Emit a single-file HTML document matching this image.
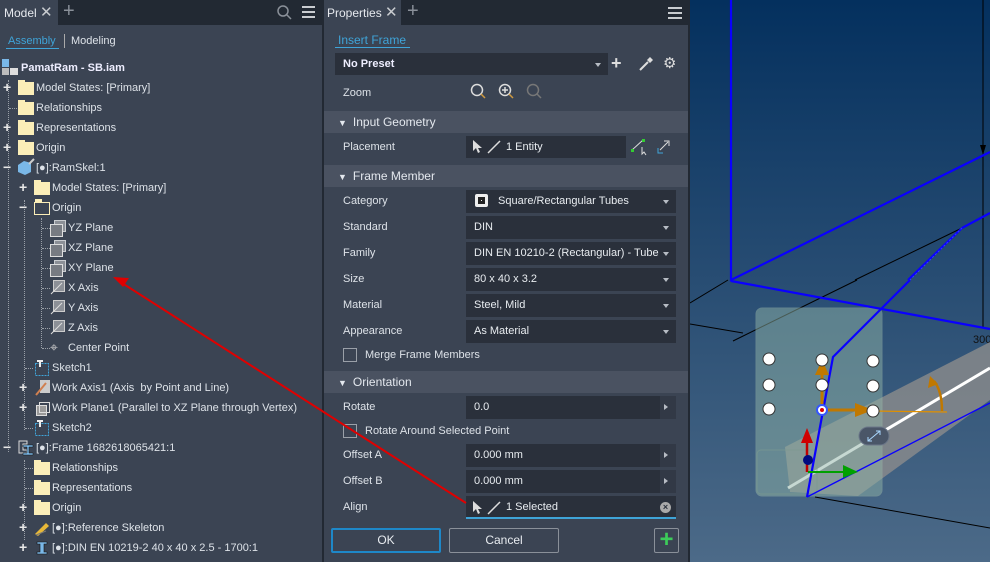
<!DOCTYPE html>
<html><head><meta charset="utf-8"><style>
*{margin:0;padding:0;box-sizing:border-box}
body{width:990px;height:562px;overflow:hidden;background:#3b4453;font-family:"Liberation Sans",sans-serif;font-size:11px;color:#dde2e8;position:relative}
.a{position:absolute;white-space:nowrap}
.t{position:absolute;white-space:nowrap;line-height:20px;height:20px}
.fold{position:absolute;width:16px;height:13px;background:#fbeeb8;border-top:2px solid #fbeeb8}
.fold:before{content:"";position:absolute;left:0;top:-4px;width:7px;height:3px;background:#fbeeb8}
.exp{position:absolute;color:#e8e8e8;font-size:14px;font-weight:bold;line-height:20px}
.pl{position:absolute;width:12px;height:12px;border:1px solid #c9ccd0;background:#8c9097}
.pl:after{content:"";position:absolute;left:-5px;top:3px;width:11px;height:11px;border:1px solid #ddd;background:#777b82}
.vd{position:absolute;border-left:1px dotted #9aa0a8;width:0}
.hd{position:absolute;border-top:1px dotted #9aa0a8;height:0;width:8px}
.hdr{position:absolute;left:324px;width:364px;height:22px;background:#4a5261;color:#e4e8ee;font-size:12px;line-height:22px;padding-left:14px}
.lbl{position:absolute;left:343px;color:#dde2e8;line-height:20px}
.fld{position:absolute;left:466px;width:210px;height:23px;background:#2a303b;color:#e8ecf0;line-height:23px;padding-left:8px}
.dd:after{content:"";position:absolute;right:7px;top:10px;border:3px solid transparent;border-top:4px solid #b7bcc4}
.sp:after{content:"";position:absolute;right:0;top:0;width:16px;height:23px;background:#323946;}
.sp:before{content:"";position:absolute;right:5px;top:8px;border:3px solid transparent;border-left:4px solid #b7bcc4;z-index:2}
.cb{position:absolute;left:343px;width:14px;height:14px;border:1px solid #9aa0a8}
</style></head><body>
<div class="a" style="left:0;top:0;width:322px;height:25px;background:#222933"></div>
<div class="a" style="left:0;top:0;width:58px;height:25px;background:#3b4453"></div>
<div class="a" style="left:4px;top:6px;font-size:12px;color:#e6e9ee">Model</div>
<div class="a" style="left:40px;top:3px;font-size:15px;color:#c9ccd0">✕</div>
<div class="a" style="left:63px;top:0px;font-size:20px;color:#8a9099">+</div>
<svg class="a" style="left:276px;top:5px" width="40" height="16"><circle cx="7" cy="6" r="5" stroke="#8a9099" stroke-width="1.5" fill="none"/><line x1="11" y1="10" x2="15" y2="14" stroke="#8a9099" stroke-width="1.5"/><path d="M26 2h13M26 7h13M26 12h13" stroke="#c9ccd0" stroke-width="2"/></svg>
<div class="a" style="left:322px;top:0;width:2px;height:562px;background:#222933"></div>
<div class="a" style="left:8px;top:35px;color:#3fa4d8;font-size:11px">Assembly</div>
<div class="a" style="left:6px;top:48px;width:53px;height:1px;background:#3fa4d8"></div>
<div class="a" style="left:64px;top:34px;width:1px;height:14px;background:#aaa"></div>
<div class="a" style="left:71px;top:35px;color:#dde2e8">Modeling</div>
<svg class="a" style="left:2px;top:59px" width="16" height="18"><rect x="0" y="0" width="7" height="8" fill="#7ab8e8"/><rect x="0" y="9" width="7" height="7" fill="#bbb"/><rect x="8" y="9" width="8" height="7" fill="#ddd"/></svg>
<div class="t" style="left:21px;top:58px;font-weight:bold;color:#eef">PamatRam - SB.iam</div>
<div class="vd" style="left:8px;top:80px;height:372px"></div>
<div class="vd" style="left:24px;top:200px;height:230px"></div>
<div class="vd" style="left:41px;top:218px;height:130px"></div>
<div class="vd" style="left:24px;top:460px;height:80px"></div>
<div class="exp" style="left:3px;top:77px">+</div><div class="fold" style="left:18px;top:82px"></div><div class="t" style="left:36px;top:78px">Model States: [Primary]</div>
<div class="hd" style="left:9px;top:108px"></div><div class="fold" style="left:18px;top:102px"></div><div class="t" style="left:36px;top:98px">Relationships</div>
<div class="exp" style="left:3px;top:117px">+</div><div class="fold" style="left:18px;top:122px"></div><div class="t" style="left:36px;top:118px">Representations</div>
<div class="exp" style="left:3px;top:137px">+</div><div class="fold" style="left:18px;top:142px"></div><div class="t" style="left:36px;top:138px">Origin</div>
<div class="exp" style="left:3px;top:157px">−</div><svg class="a" style="left:17px;top:158px" width="18" height="18"><path d="M1 7l6-4 7 2v9l-6 3-7-3z" fill="#7ab8e8"/><path d="M12 6l5-5" stroke="#ccc" stroke-width="2"/></svg><div class="t" style="left:36px;top:158px">[●]:RamSkel:1</div>
<div class="exp" style="left:19px;top:177px">+</div><div class="fold" style="left:34px;top:182px"></div><div class="t" style="left:52px;top:178px">Model States: [Primary]</div>
<div class="exp" style="left:19px;top:197px">−</div><div class="fold" style="left:34px;top:202px;background:none;border:1px solid #fbeeb8"></div><div class="t" style="left:52px;top:198px">Origin</div>
<div class="hd" style="left:42px;top:228px"></div><div class="pl" style="left:54px;top:220px"></div><div class="t" style="left:68px;top:218px">YZ Plane</div>
<div class="hd" style="left:42px;top:248px"></div><div class="pl" style="left:54px;top:240px"></div><div class="t" style="left:68px;top:238px">XZ Plane</div>
<div class="hd" style="left:42px;top:268px"></div><div class="pl" style="left:54px;top:260px"></div><div class="t" style="left:68px;top:258px">XY Plane</div>
<svg class="a" style="left:50px;top:280px" width="16" height="60"><g fill="#8c9097" stroke="#ccc"><rect x="3.5" y="0.5" width="11" height="11"/><rect x="3.5" y="20.5" width="11" height="11"/><rect x="3.5" y="40.5" width="11" height="11"/></g><path d="M1 14L12 3M1 34L12 23M1 54L12 43" stroke="#ddd"/></svg>
<div class="hd" style="left:42px;top:288px"></div><div class="t" style="left:68px;top:278px">X Axis</div>
<div class="hd" style="left:42px;top:308px"></div><div class="t" style="left:68px;top:298px">Y Axis</div>
<div class="hd" style="left:42px;top:328px"></div><div class="t" style="left:68px;top:318px">Z Axis</div>
<div class="hd" style="left:42px;top:348px"></div><div class="a" style="left:50px;top:339px;font-size:14px;color:#ccc">⌖</div><div class="t" style="left:68px;top:338px">Center Point</div>
<svg class="a" style="left:34px;top:360px" width="16" height="96"><g fill="none" stroke="#3fa4d8" stroke-dasharray="2 1"><rect x="1.5" y="3.5" width="13" height="12"/><rect x="1.5" y="63.5" width="13" height="12"/></g><path d="M3 1h6M6 1v6M3 61h6M6 61v6" stroke="#eee" stroke-width="2"/><rect x="6" y="20" width="10" height="13" fill="#ccc"/><path d="M2 35L12 23" stroke="#d08050" stroke-width="2"/><rect x="2.5" y="45.5" width="10" height="10" fill="#999" stroke="#ddd"/><rect x="5.5" y="42.5" width="10" height="10" fill="none" stroke="#ddd"/></svg>
<div class="hd" style="left:25px;top:368px"></div><div class="t" style="left:52px;top:358px">Sketch1</div>
<div class="exp" style="left:19px;top:377px">+</div><div class="t" style="left:52px;top:378px">Work Axis1 (Axis&nbsp; by Point and Line)</div>
<div class="exp" style="left:19px;top:397px">+</div><div class="t" style="left:52px;top:398px">Work Plane1 (Parallel to XZ Plane through Vertex)</div>
<div class="hd" style="left:25px;top:428px"></div><div class="t" style="left:52px;top:418px">Sketch2</div>
<div class="exp" style="left:3px;top:437px">−</div><svg class="a" style="left:18px;top:440px" width="16" height="16"><path d="M1 1h8v3h-4v6h4v3h-8z" fill="none" stroke="#ddd"/><path d="M5 5h10v2h-4v6h4v2h-10v-2h4v-6h-4z" fill="#7ab8e8" stroke="#111" stroke-width=".5"/></svg><div class="t" style="left:36px;top:438px">[●]:Frame 1682618065421:1</div>
<div class="hd" style="left:25px;top:468px"></div><div class="fold" style="left:34px;top:462px"></div><div class="t" style="left:52px;top:458px">Relationships</div>
<div class="hd" style="left:25px;top:488px"></div><div class="fold" style="left:34px;top:482px"></div><div class="t" style="left:52px;top:478px">Representations</div>
<div class="exp" style="left:19px;top:497px">+</div><div class="fold" style="left:34px;top:502px"></div><div class="t" style="left:52px;top:498px">Origin</div>
<div class="exp" style="left:19px;top:517px">+</div><svg class="a" style="left:34px;top:520px" width="16" height="16"><path d="M1 14L12 3l3 3L4 16z" fill="#e8b838"/><path d="M2 15l10-4" stroke="#777"/></svg><div class="t" style="left:52px;top:518px">[●]:Reference Skeleton</div>
<div class="exp" style="left:19px;top:537px">+</div><svg class="a" style="left:36px;top:541px" width="12" height="14"><path d="M1 1h10v2h-3v8h3v2h-10v-2h3v-8h-3z" fill="#7ab8e8" stroke="#111" stroke-width=".6"/></svg><div class="t" style="left:52px;top:538px">[●]:DIN EN 10219-2 40 x 40 x 2.5 - 1700:1</div>

<div class="a" style="left:324px;top:0;width:364px;height:25px;background:#222933"></div>
<div class="a" style="left:324px;top:0;width:77px;height:25px;background:#3b4453"></div>
<div class="a" style="left:327px;top:6px;font-size:12px;color:#e6e9ee">Properties</div>
<div class="a" style="left:385px;top:3px;font-size:15px;color:#c9ccd0">✕</div>
<div class="a" style="left:407px;top:0px;font-size:20px;color:#8a9099">+</div>
<svg class="a" style="left:667px;top:6px" width="16" height="14"><path d="M1 2h14M1 7h14M1 12h14" stroke="#c9ccd0" stroke-width="2"/></svg>
<div class="a" style="left:688px;top:0;width:2px;height:562px;background:#222933"></div>
<div class="a" style="left:338px;top:33px;color:#3fa4d8;font-size:12px">Insert Frame</div>
<div class="a" style="left:335px;top:47px;width:75px;height:1px;background:#3fa4d8"></div>
<div class="a dd" style="left:335px;top:53px;width:273px;height:22px;background:#2a303b;padding-left:8px;line-height:22px;font-weight:bold;color:#eef">No Preset</div>
<div class="a" style="left:611px;top:53px;font-size:18px;font-weight:bold;color:#ddd">+</div>
<svg class="a" style="left:638px;top:56px" width="16" height="16"><path d="M2 14L10 6" stroke="#ddd" stroke-width="2"/><path d="M9 4l3-3 3 3-3 3z" fill="#ddd"/></svg>
<div class="a" style="left:663px;top:54px;font-size:15px;color:#ddd">⚙</div>
<div class="lbl" style="left:343px;top:83px">Zoom</div>
<svg class="a" style="left:470px;top:83px" width="75" height="20"><g fill="none" stroke-width="1.5"><circle cx="7" cy="7" r="5.5" stroke="#ddd"/><path d="M11 11l4 4" stroke="#d09a40"/><circle cx="35" cy="7" r="5.5" stroke="#ddd"/><path d="M32 7h6M35 4v6" stroke="#ddd"/><path d="M39 11l4 4" stroke="#d09a40"/><circle cx="63" cy="7" r="5.5" stroke="#777"/><path d="M67 11l4 4" stroke="#777"/></g></svg>
<div class="hdr" style="top:111px"><span style="font-size:9px;margin-right:6px">▼</span>Input Geometry</div>
<div class="lbl" style="top:137px">Placement</div>
<div class="a" style="left:466px;top:136px;width:160px;height:22px;background:#2a303b;padding-left:40px;line-height:22px;color:#e8ecf0">1 Entity</div>
<svg class="a" style="left:472px;top:139px" width="30" height="16"><path d="M1 1v11l3-3 2 5 2-1-2-4h4z" fill="#ddd"/><path d="M16 14L28 2" stroke="#ddd" stroke-width="1.5"/></svg>
<svg class="a" style="left:630px;top:137px" width="45" height="20"><path d="M2 13L13 3" stroke="#ddd"/><rect x="1" y="12" width="3" height="3" fill="#3c3"/><rect x="12" y="2" width="3" height="3" fill="#3c3"/><path d="M12 10v7l2-2 2 3" stroke="#ddd" fill="none"/><path d="M30 13l8-8M34 4h5v5" stroke="#ddd" fill="none"/><path d="M28 11v5h5" stroke="#3fa4d8" fill="none"/></svg>
<div class="hdr" style="top:165px"><span style="font-size:9px;margin-right:6px">▼</span>Frame Member</div>
<div class="lbl" style="top:191px">Category</div><div class="fld dd" style="top:190px;padding-left:32px">Square/Rectangular Tubes</div>
<div class="a" style="left:475px;top:194px;width:13px;height:13px;background:#eee;border-radius:2px;border:3px solid #eee;box-shadow:inset 0 0 0 3px #222"></div>
<div class="lbl" style="top:217px">Standard</div><div class="fld dd" style="top:216px">DIN</div>
<div class="lbl" style="top:243px">Family</div><div class="fld dd" style="top:242px">DIN EN 10210-2 (Rectangular) - Tube</div>
<div class="lbl" style="top:269px">Size</div><div class="fld dd" style="top:268px">80 x 40 x 3.2</div>
<div class="lbl" style="top:295px">Material</div><div class="fld dd" style="top:294px">Steel, Mild</div>
<div class="lbl" style="top:321px">Appearance</div><div class="fld dd" style="top:320px">As Material</div>
<div class="cb" style="top:348px"></div><div class="lbl" style="left:365px;top:345px">Merge Frame Members</div>
<div class="hdr" style="top:371px"><span style="font-size:9px;margin-right:6px">▼</span>Orientation</div>
<div class="lbl" style="top:397px">Rotate</div><div class="fld sp" style="top:396px;width:210px">0.0</div>
<div class="cb" style="top:424px"></div><div class="lbl" style="left:365px;top:421px">Rotate Around Selected Point</div>
<div class="lbl" style="top:445px">Offset A</div><div class="fld sp" style="top:444px">0.000 mm</div>
<div class="lbl" style="top:471px">Offset B</div><div class="fld sp" style="top:470px">0.000 mm</div>
<div class="lbl" style="top:497px">Align</div>
<div class="a" style="left:466px;top:496px;width:210px;height:23px;background:#2a303b;border-bottom:2px solid #3fa4d8;padding-left:40px;line-height:23px;color:#e8ecf0">1 Selected</div>
<svg class="a" style="left:472px;top:500px" width="30" height="16"><path d="M1 1v11l3-3 2 5 2-1-2-4h4z" fill="#ddd"/><path d="M16 14L28 2" stroke="#ddd" stroke-width="1.5"/></svg>
<div class="a" style="left:660px;top:502px;width:11px;height:11px;border-radius:50%;background:#aaa;color:#2a303b;font-size:9px;line-height:11px;text-align:center;font-weight:bold">×</div>
<div class="a" style="left:331px;top:528px;width:110px;height:25px;border:2px solid #1e88c8;border-radius:2px;text-align:center;line-height:21px;font-size:12px;color:#e8ecf0">OK</div>
<div class="a" style="left:449px;top:528px;width:110px;height:25px;border:1px solid #8a9099;border-radius:2px;text-align:center;line-height:23px;font-size:12px;color:#e8ecf0">Cancel</div>
<div class="a" style="left:654px;top:528px;width:25px;height:25px;border:1px solid #8a9099;border-radius:2px;text-align:center;line-height:22px;font-size:24px;font-weight:bold;color:#3ccc5a">+</div>

<svg class="a" style="left:690px;top:0" width="300" height="562">
<defs><linearGradient id="g" x1="0" y1="0" x2="0" y2="1"><stop offset="0" stop-color="#04305e"/><stop offset="1" stop-color="#4c6a88"/></linearGradient></defs>
<rect width="300" height="562" fill="url(#g)"/>
<g transform="translate(-690 0)">
<path d="M983 0V327M690 324L743 333M733 341L857 280M690 303L728 280M855 280L962 228M815 497L990 528" stroke="#000" stroke-width="1" fill="none"/>
<path d="M980 145l3 10 3-10z" fill="#000"/>
<text x="973" y="343" font-family="Liberation Sans" font-size="11" fill="#111">300</text>
<path d="M785 447L990 342L990 400L858 496L790 492z" fill="#8c8c8c" opacity=".8"/>
<path d="M788 488L990 368" stroke="#fff" stroke-width="3"/>
<rect x="756" y="308" width="126" height="188" rx="6" fill="#8fb3a6" opacity=".5" stroke="#9ab8a8"/>
<rect x="757" y="450" width="60" height="44" rx="4" fill="none" stroke="#7a9a90" opacity=".7"/>
<g stroke="#0a00ff" fill="none" stroke-width="2.2">
<path d="M731 0V280L990 152M731 281L990 329M962 228L990 213M962 228L908 280M807 497L833 357L910 280"/>
<path d="M807 497L990 403" stroke-width="1.4"/>
</g>
<path d="M962 228L910 280" stroke="#3040ff" stroke-dasharray="2 2"/>
<path d="M822 410L860 410M822 410V372" stroke="#c07800" stroke-width="3"/>
<path d="M855 403l18 7-18 7z" fill="#c07800"/><path d="M815 375l7-15 7 15z" fill="#c07800"/>
<path d="M870 411L947 412" stroke="#e09000" stroke-width="1.2"/>
<path d="M942 411q0-20-8-30" stroke="#c07800" stroke-width="2.5" fill="none"/><path d="M928 388l2-12 8 8z" fill="#c07800"/>
<path d="M807 472v-34" stroke="#c00000" stroke-width="2.5"/><path d="M801 443l6-15 6 15z" fill="#d00000"/>
<path d="M808 472h42" stroke="#00a000" stroke-width="2"/><path d="M843 465l15 7-15 6z" fill="#00a000"/>
<circle cx="808" cy="460" r="5" fill="#000a80"/>
<g fill="#fff" stroke="#333"><circle cx="769" cy="359" r="6"/><circle cx="822" cy="360" r="6"/><circle cx="873" cy="361" r="6"/><circle cx="769" cy="385" r="6"/><circle cx="822" cy="385" r="6"/><circle cx="873" cy="386" r="6"/><circle cx="769" cy="409" r="6"/><circle cx="822" cy="410" r="5" stroke="#35f" stroke-width="2"/><circle cx="873" cy="411" r="6"/></g>
<circle cx="822" cy="410" r="2" fill="#d00"/>
<rect x="859" y="427" width="30" height="18" rx="9" fill="#4a5668" stroke="#6a7688"/>
<path d="M868 441l12-10M876 431h4v4M868 437v4h4" stroke="#aad8ff" fill="none"/>
</g>
</svg>
<svg class="a" style="left:0;top:0" width="990" height="562"><path d="M466 503L122 283" stroke="#e00000" stroke-width="2"/><path d="M113 277l16 1-6 9z" fill="#e00000"/></svg>
</body></html>
